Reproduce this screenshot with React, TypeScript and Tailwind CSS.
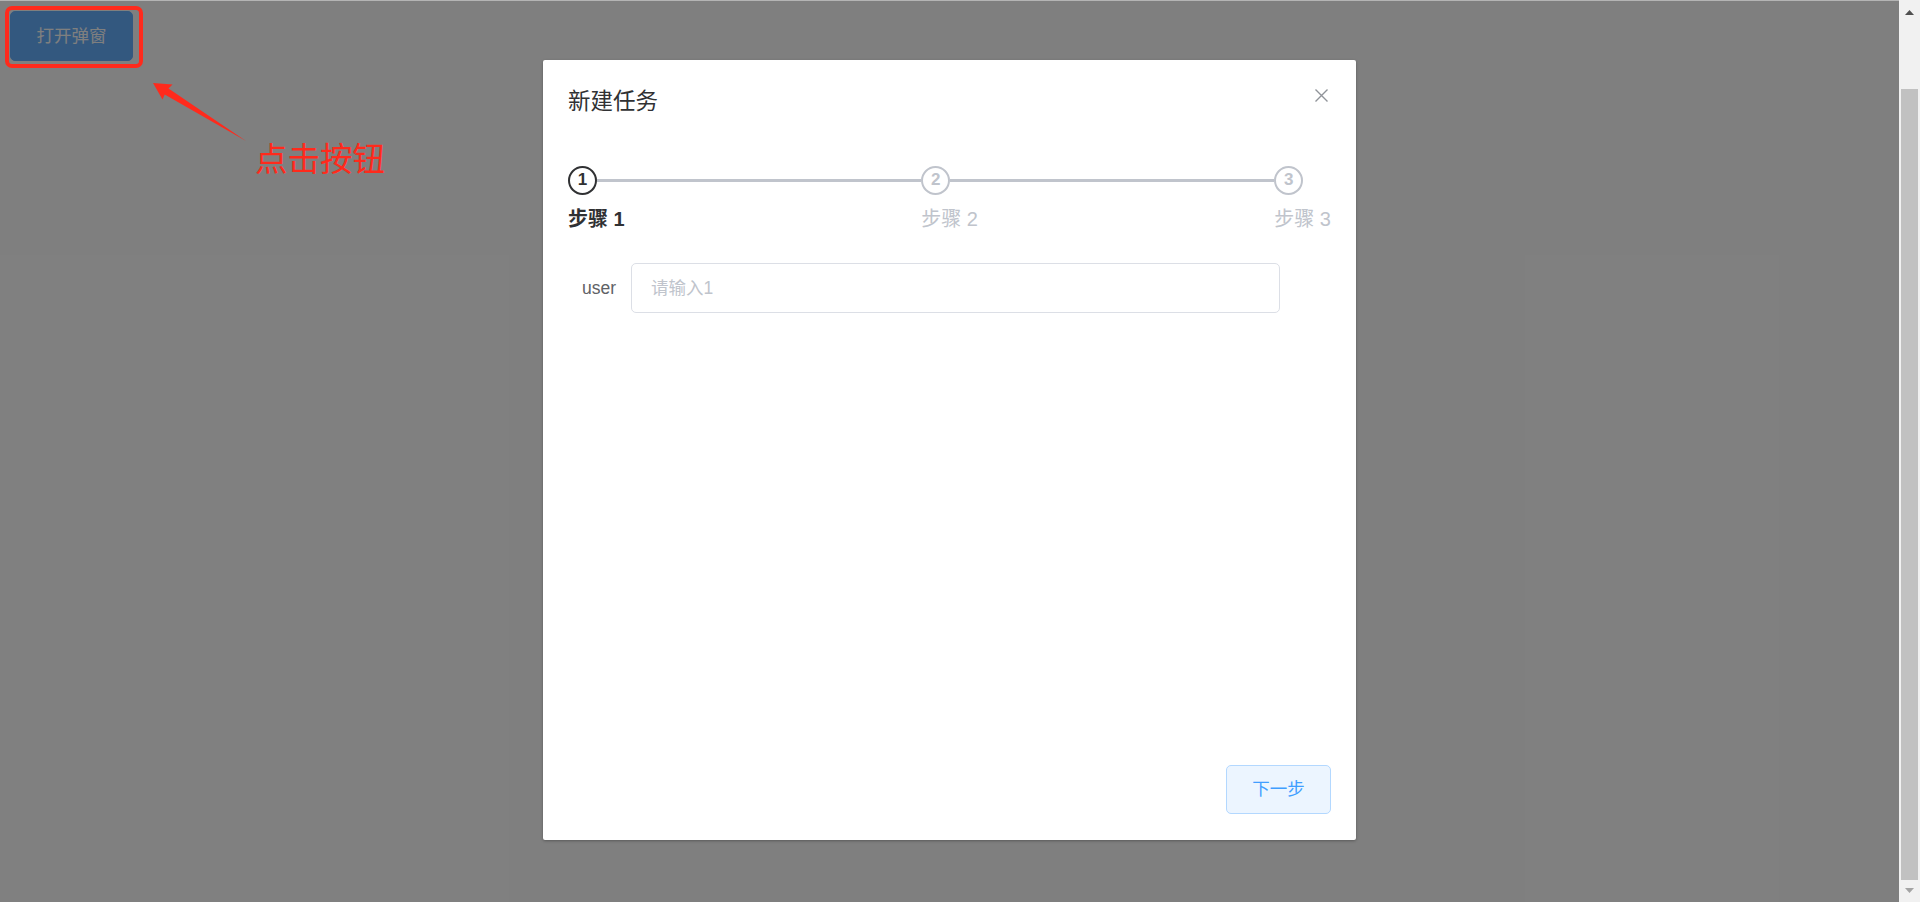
import React from 'react';

const font = "font-['Liberation_Sans','Noto_Sans_CJK_SC',sans-serif]";

interface StepProps {
  num: number;
  title: string;
  active?: boolean;
  last?: boolean;
}

const Step: React.FC<StepProps> = ({ num, title, active, last }) => {
  const color = active ? 'text-[#303133] border-[#303133]' : 'text-[#c0c4cc] border-[#c0c4cc]';
  return (
    <div className={last ? 'shrink-0' : 'flex-1 min-w-0'}>
      <div className="flex items-center h-[30px]">
        <div
          className={`w-[29px] h-[29px] shrink-0 rounded-full border-[2.5px] flex items-center justify-center text-[17px] font-bold ${color}`}
        >
          {num}
        </div>
        {!last && <div className="flex-1 h-[3px] bg-[#c0c4cc]"></div>}
      </div>
      <div
        className={`text-[20px] leading-[48px] whitespace-nowrap ${
          active ? 'text-[#303133] font-bold' : 'text-[#c0c4cc]'
        }`}
      >
        {title}
      </div>
    </div>
  );
};

const Dialog: React.FC = () => {
  return (
    <div className="relative w-[813px] h-[780px] bg-white rounded-[2px] shadow-[0_1px_3px_rgba(0,0,0,0.3)] flex flex-col">
      {/* header */}
      <div className="px-[25px] pt-[27px] pb-[10px]">
        <span className="text-[22.5px] leading-[30px] text-[#303133]">新建任务</span>
      </div>
      <button className="absolute top-[25px] right-[25px] w-[20px] h-[20px] flex items-center justify-center">
        <svg width="13" height="13" viewBox="0 0 13 13">
          <path d="M0.5 0.5 L12.5 12.5 M12.5 0.5 L0.5 12.5" stroke="#909399" strokeWidth="1.4" fill="none" />
        </svg>
      </button>

      {/* body */}
      <div className="flex-1 px-[25px] pt-[38px]">
        <div className="flex">
          <Step num={1} title="步骤 1" active />
          <Step num={2} title="步骤 2" />
          <Step num={3} title="步骤 3" last />
        </div>

        <div className="flex items-center mt-[20px]">
          <label className="w-[63px] shrink-0 pr-[15px] text-right text-[17.5px] text-[#606266]">user</label>
          <input
            className={`w-[649px] h-[50px] border border-[#dcdfe6] rounded-[5px] px-[19px] text-[17.5px] text-[#606266] outline-none placeholder:text-[#c0c4cc] ${font}`}
            placeholder="请输入1"
          />
        </div>
      </div>

      {/* footer */}
      <div className="flex justify-end px-[25px] pb-[26px]">
        <button className="w-[105px] h-[49px] rounded-[5px] border border-[#b3d8ff] bg-[#ecf5ff] text-[#409eff] text-[17.5px]">
          下一步
        </button>
      </div>
    </div>
  );
};

const Scrollbar: React.FC = () => (
  <div className="w-[21px] shrink-0 bg-[#f1f1f1] flex flex-col">
    <div className="h-[21px] flex items-start justify-center pt-[10px]">
      <svg width="9" height="5" viewBox="0 0 9 5">
        <path d="M4.5 0 L9 5 L0 5 Z" fill="#505050" />
      </svg>
    </div>
    <div className="mt-[68px] mx-[2px] h-[791px] bg-[#c1c1c1]"></div>
    <div className="flex-1 flex items-start justify-center pt-[8px]">
      <svg width="9" height="5" viewBox="0 0 9 5">
        <path d="M0 0 L9 0 L4.5 5 Z" fill="#a3a3a3" />
      </svg>
    </div>
  </div>
);

export default function App() {
  return (
    <div className={`w-[1920px] h-[902px] flex overflow-hidden bg-white ${font}`}>
      <div className="flex-1 flex flex-col">
        <div className="h-px bg-[#b4b4b4]"></div>
        <div className="relative flex-1">
          {/* page content */}
          <div className="p-[10px]">
            <button className="w-[123px] h-[50px] rounded-[5px] bg-[#66b1ff] border border-[#66b1ff] text-white text-[17.5px]">
              打开弹窗
            </button>
          </div>

          {/* modal mask */}
          <div className="absolute inset-0 bg-black/50 flex justify-center pt-[59px]">
            <Dialog />
          </div>

          {/* screenshot annotations */}
          <div className="absolute left-[5px] top-[5px] w-[138px] h-[62px] border-4 border-[#ff2a1c] rounded-[7px]"></div>
          <svg className="absolute left-0 top-0" width="260" height="150" viewBox="0 -1 260 150">
            <path d="M153 81 L172.5 82.5 L168.5 86.5 L246 139 L164.7 92.5 L162.5 97.5 Z" fill="#ff2a1c" />
          </svg>
          <div className="absolute left-[255px] top-[140px] text-[32.5px] leading-none text-[#ff2a1c] font-['Noto_Sans_CJK_SC',sans-serif]">
            点击按钮
          </div>
        </div>
      </div>
      <Scrollbar />
    </div>
  );
}
